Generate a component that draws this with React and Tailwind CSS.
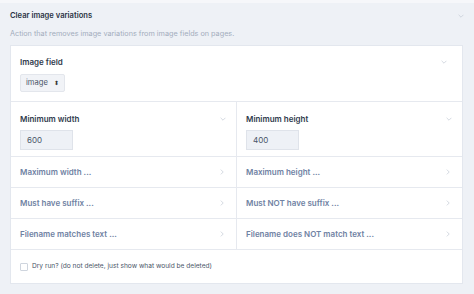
import React from 'react'

const Down = ({ className }) => (
  <svg viewBox="0 0 10 6" className={className} fill="none" stroke="currentColor" strokeWidth="1.2">
    <path d="M1 1l4 4 4-4" />
  </svg>
)

const Right = ({ className }) => (
  <svg viewBox="0 0 6 10" className={className} fill="none" stroke="currentColor" strokeWidth="1.2">
    <path d="M1 1l4 4-4 4" />
  </svg>
)

function OpenField({ label, value, last }) {
  return (
    <div className={`flex-1 flex flex-col px-[9px] pt-[11px] ${last ? '' : 'border-r border-[#e6e9ef]'}`}>
      <div className="flex items-center justify-between">
        <span className="text-[8px] font-semibold text-[#2f3a4c]">{label}</span>
        <Down className="w-[6px] h-[4px] text-[#c5cbd5] mr-[1px]" />
      </div>
      <div className="mt-[5px] w-[53px] h-[20px] bg-[#eef1f6] border border-[#dfe3ea] flex items-center px-[6px] text-[8px] text-[#4a5568]">
        {value}
      </div>
    </div>
  )
}

function Collapsed({ label, last }) {
  return (
    <div className={`flex-1 flex items-center justify-between px-[9px] ${last ? '' : 'border-r border-[#e6e9ef]'}`}>
      <span className="text-[8px] font-semibold text-[#6f82a3]">{label}</span>
      <Right className="w-[4px] h-[6px] text-[#c5cbd5] mr-[3px]" />
    </div>
  )
}

export default function App() {
  const rows = [
    ['Maximum width ...', 'Maximum height ...'],
    ['Must have suffix ...', 'Must NOT have suffix ...'],
    ['Filename matches text ...', 'Filename does NOT match text ...'],
  ]
  return (
    <div className="w-[474px] h-[294px] bg-[#eef1f6] overflow-hidden" style={{ fontFamily: 'Inter, "Noto Sans", sans-serif' }}>
      <div className="h-[3px] bg-[#f6f7fa]" />
      <div className="px-[10px]">
        <div className="flex items-center justify-between h-[24px] pt-[1px]">
          <span className="text-[7.6px] font-semibold text-[#2b3444]">Clear image variations</span>
          <Down className="w-[6px] h-[4px] text-[#c5cbd5] mr-[0px]" />
        </div>
        <div className="h-[18px] text-[7.25px] text-[#a3adbd] leading-[14px]">
          Action that removes image variations from image fields on pages.
        </div>
        <div className="w-[453px] bg-white border border-[#e3e7ee]">
          <div className="h-[56px] px-[9px] pt-[10px] border-b border-[#e6e9ef]">
            <div className="flex items-center justify-between">
              <span className="text-[8px] font-semibold text-[#2f3a4c]">Image field</span>
              <Down className="w-[6px] h-[4px] text-[#c5cbd5] mr-[6px]" />
            </div>
            <div className="mt-[6px] w-[45px] h-[18px] bg-[#f1f3f7] border border-[#e3e6ec] rounded-[2px] flex items-center justify-between px-[5px] text-[7.6px] text-[#4a5568]">
              <span>image</span>
              <span className="text-[6px] leading-none text-[#333]">⬍</span>
            </div>
          </div>
          <div className="h-[55px] flex border-b border-[#e6e9ef]">
            <OpenField label="Minimum width" value="600" />
            <OpenField label="Minimum height" value="400" last />
          </div>
          {rows.map((r, i) => (
            <div key={i} className="h-[31px] flex border-b border-[#e6e9ef]">
              <Collapsed label={r[0]} />
              <Collapsed label={r[1]} last />
            </div>
          ))}
          <div className="h-[33px] flex items-center px-[9px] gap-[4px]">
            <div className="w-[8px] h-[8px] border border-[#cfd5de] rounded-[1px] bg-white" />
            <span className="text-[6.6px] text-[#4a5568]">Dry run? (do not delete, just show what would be deleted)</span>
          </div>
        </div>
      </div>
    </div>
  )
}
